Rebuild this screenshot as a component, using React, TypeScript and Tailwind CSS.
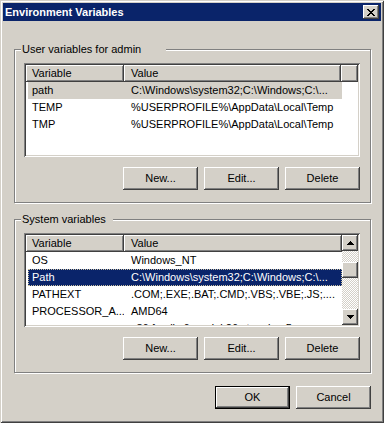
import clsx from "clsx";

const raised =
  "bg-[#d4d0c8] shadow-[inset_-1px_-1px_#404040,inset_1px_1px_#fff,inset_-2px_-2px_#808080]";
const sunken =
  "shadow-[inset_1px_1px_#808080,inset_-1px_-1px_#fff,inset_2px_2px_#404040,inset_-2px_-2px_#d4d0c8]";
const etched =
  "border border-[#808080] shadow-[inset_1px_1px_#fff,1px_1px_#fff]";

type Row = { name: string; value: string; sel?: "gray" | "blue" };

const userRows: Row[] = [
  { name: "path", value: "C:\\Windows\\system32;C:\\Windows;C:\\...", sel: "gray" },
  { name: "TEMP", value: "%USERPROFILE%\\AppData\\Local\\Temp" },
  { name: "TMP", value: "%USERPROFILE%\\AppData\\Local\\Temp" },
];

// last row is mostly hidden below the list's bottom edge
const systemRows: Row[] = [
  { name: "OS", value: "Windows_NT" },
  { name: "Path", value: "C:\\Windows\\system32;C:\\Windows;C:\\...", sel: "blue" },
  { name: "PATHEXT", value: ".COM;.EXE;.BAT;.CMD;.VBS;.VBE;.JS;...." },
  { name: "PROCESSOR_A...", value: "AMD64" },
  { name: "", value: "x86 family 6 model 26 stepping 5" },
];

const XGlyph = () => (
  <svg width="8" height="7" viewBox="0 0 8 7" shapeRendering="crispEdges">
    <path
      d="M0 0h2v1h-2zM6 0h2v1h-2zM1 1h2v1h-2zM5 1h2v1h-2zM2 2h4v1h-4zM3 3h2v1h-2zM2 4h4v1h-4zM1 5h2v1h-2zM5 5h2v1h-2zM0 6h2v1h-2zM6 6h2v1h-2z"
      fill="#000"
    />
  </svg>
);

const Arrow = ({ down }: { down?: boolean }) => (
  <svg
    width="7"
    height="4"
    viewBox="0 0 7 4"
    shapeRendering="crispEdges"
    className={clsx(down && "rotate-180")}
  >
    <path d="M3 0h1v1h-1zM2 1h3v1h-3zM1 2h5v1h-5zM0 3h7v1h-7z" fill="#000" />
  </svg>
);

const Button = ({ label, isDefault }: { label: string; isDefault?: boolean }) => (
  <div
    className={clsx(
      "w-[75px] h-[23px] flex items-center justify-center",
      raised,
      isDefault && "border border-black"
    )}
  >
    {label}
  </div>
);

const Header = ({ label, className }: { label?: string; className: string }) => (
  <div className={clsx("h-[17px] flex items-center shrink-0", raised, className)}>
    {label}
  </div>
);

const ListView = ({ rows, scroll }: { rows: Row[]; scroll?: boolean }) => (
  <div className={clsx("w-[336px] h-[94px] bg-white p-[2px]", sunken)}>
    <div className="flex h-full overflow-hidden">
      <div className="flex-1 flex flex-col overflow-hidden">
        <div className="flex">
          <Header label="Variable" className="w-[98px] pl-[6px]" />
          <Header
            label="Value"
            className={clsx(scroll ? "flex-1" : "w-[217px]", "pl-[7px]")}
          />
          {!scroll && <Header className="flex-1" />}
        </div>
        {rows.map((r) => (
          <div
            key={r.value}
            className={clsx(
              "ml-[2px] w-[314px] h-[17px] shrink-0 flex items-center whitespace-nowrap",
              r.sel === "gray" && "bg-[#d4d0c8]",
              r.sel === "blue" &&
                "bg-[#0a246a] text-white outline-1 outline-dotted outline-[#c8c0a0] -outline-offset-1"
            )}
          >
            <div className="w-[96px] pl-[4px] overflow-hidden">{r.name}</div>
            <div className="w-[218px] pl-[7px] overflow-hidden">{r.value}</div>
          </div>
        ))}
      </div>
      {scroll && (
        <div className="w-[16px] flex flex-col">
          <div className={clsx("h-[16px] flex items-center justify-center", raised)}>
            <Arrow />
          </div>
          <div className="flex-1 pt-[11px] bg-[repeating-conic-gradient(#fff_0_25%,#d4d0c8_0_50%)] bg-[length:2px_2px]">
            <div className={clsx("h-[16px]", raised)} />
          </div>
          <div className={clsx("h-[16px] flex items-center justify-center", raised)}>
            <Arrow down />
          </div>
        </div>
      )}
    </div>
  </div>
);

const GroupBox = ({
  title,
  titleWidth,
  rows,
  scroll,
  className,
}: {
  title: string;
  titleWidth: string;
  rows: Row[];
  scroll?: boolean;
  className: string;
}) => (
  <div
    className={clsx(
      "relative h-[154px] pl-[9px] pr-[10px] pt-[13px] flex flex-col",
      etched,
      className
    )}
  >
    <div className={clsx("absolute left-[6px] top-[-7px] px-[1px] bg-[#d4d0c8]", titleWidth)}>
      {title}
    </div>
    <ListView rows={rows} scroll={scroll} />
    <div className="flex justify-end gap-[6px] mt-[10px]">
      <Button label="New..." />
      <Button label="Edit..." />
      <Button label="Delete" />
    </div>
  </div>
);

export default function App() {
  return (
    <div className="w-[384px] h-[423px] bg-[#d4d0c8] p-[3px] flex flex-col text-black font-['Liberation_Sans',Arial,sans-serif] text-[11px] leading-[13px] shadow-[inset_1px_1px_#d4d0c8,inset_-1px_-1px_#404040,inset_2px_2px_#fff,inset_-2px_-2px_#808080]">
      <div className="h-[18px] bg-[#0a246a] flex items-center justify-between pl-[2px] pr-[2px]">
        <span className="text-white font-bold">Environment Variables</span>
        <div className={clsx("w-[16px] h-[14px] flex items-center justify-center", raised)}>
          <XGlyph />
        </div>
      </div>
      <div className="pl-[11px] pr-[10px] flex flex-col">
        <GroupBox
          title="User variables for admin"
          titleWidth="w-[145px]"
          rows={userRows}
          className="mt-[28px]"
        />
        <GroupBox
          title="System variables"
          titleWidth="w-[92px]"
          rows={systemRows}
          scroll
          className="mt-[16px] pt-[12px]"
        />
        <div className="flex justify-end gap-[6px] mt-[13px]">
          <Button label="OK" isDefault />
          <Button label="Cancel" />
        </div>
      </div>
    </div>
  );
}
